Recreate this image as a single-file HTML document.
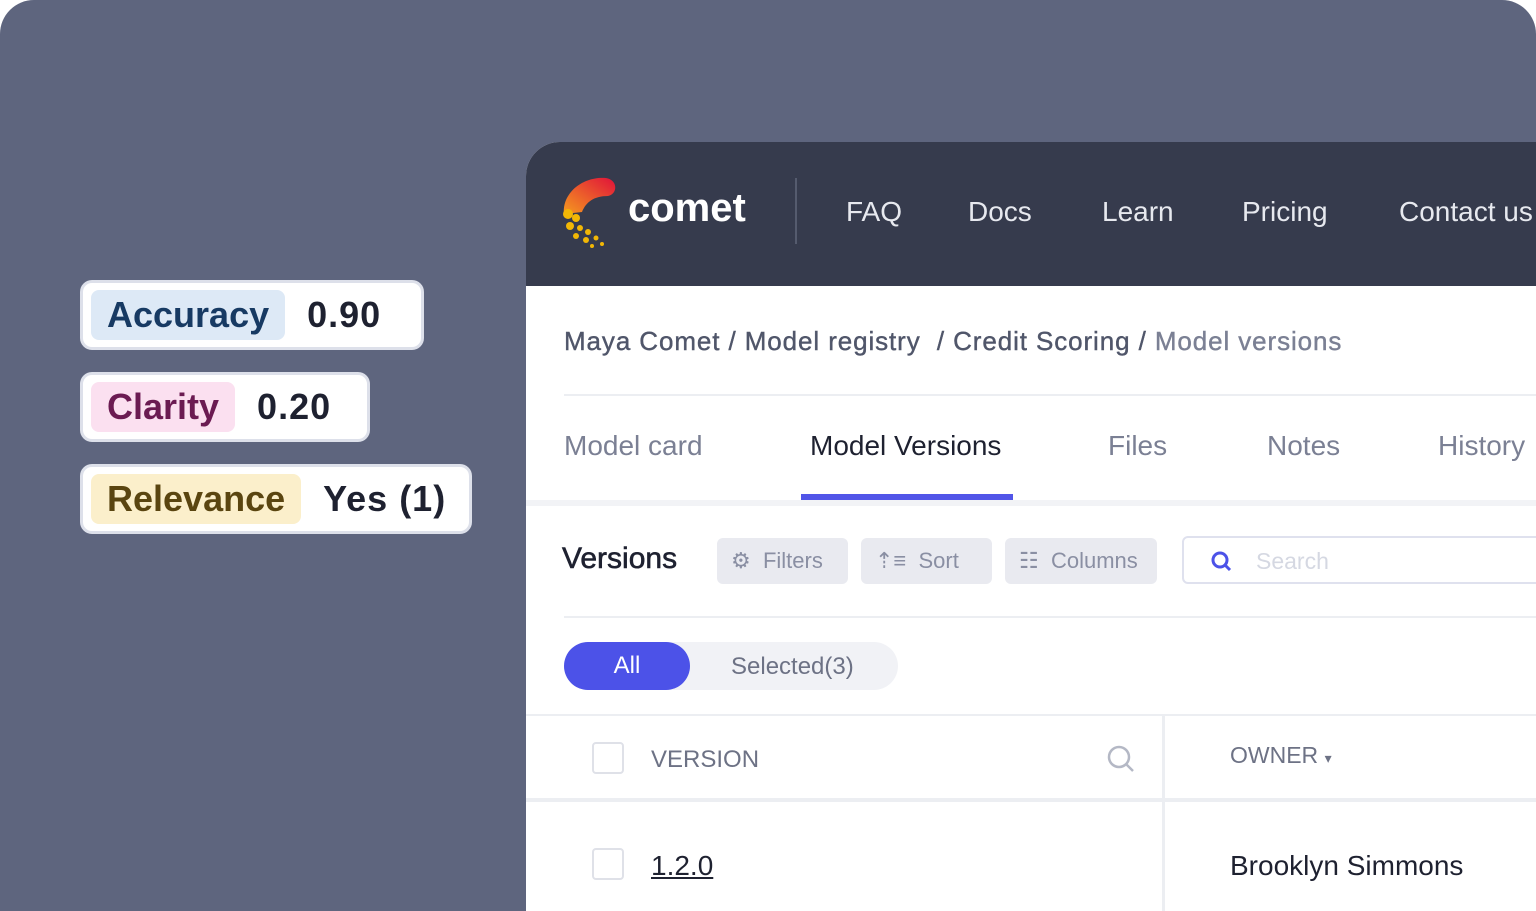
<!DOCTYPE html>
<html><head><style>
*{margin:0;padding:0;box-sizing:border-box}
body{width:1536px;height:911px;overflow:hidden;background:#fff;font-family:"Liberation Sans",sans-serif;position:relative}
.bg{position:absolute;left:0;top:0;width:1536px;height:911px;background:#5e657e;border-radius:34px 34px 0 0}
.card{position:absolute;left:80px;height:70px;background:#fff;border:3px solid #dde0ea;border-radius:12px;display:flex;align-items:center}
.tag{margin-left:8px;height:50px;border-radius:8px;padding:0 16px;display:flex;align-items:center;font-weight:bold;font-size:36px}
.val{font-weight:bold;font-size:36px;color:#1e2130;margin-left:22px;letter-spacing:1px}
.app{position:absolute;left:526px;top:142px;width:1010px;height:769px;background:#fff;border-radius:34px 0 0 0;overflow:hidden}
.hdr{height:144px;background:#363b4d;position:relative;color:#fff}
.hdr .nav{position:absolute;top:54px;font-size:28px;color:#e7e9ef}
.abs{position:absolute}
.btn{position:absolute;top:396px;height:46px;background:#e9eaf0;border-radius:6px;color:#8a8fa3;font-size:22px;display:flex;align-items:center;padding-left:14px}
</style></head><body>
<div class="bg"></div>
<div class="card" style="top:280px;width:344px"><div class="tag" style="background:#dde9f6;color:#173a63">Accuracy</div><div class="val">0.90</div></div>
<div class="card" style="top:372px;width:290px"><div class="tag" style="background:#fbe0f0;color:#6b1b52">Clarity</div><div class="val">0.20</div></div>
<div class="card" style="top:464px;width:392px"><div class="tag" style="background:#fbefcb;color:#5a4510">Relevance</div><div class="val">Yes (1)</div></div>
<div class="app">
<div class="hdr">
<svg class="abs" style="left:34px;top:32px" width="60" height="76" viewBox="0 0 60 76"><defs><linearGradient id="g" x1="0" y1="1" x2="1" y2="0"><stop offset="0" stop-color="#f59a1f"/><stop offset="1" stop-color="#e0123a"/></linearGradient></defs><path d="M4 40 C2 18 24 2 46 4 C58 6 58 20 48 22 C34 22 26 28 22 38 Z" fill="url(#g)"/><g fill="#f2b705"><circle cx="8" cy="40" r="5"/><circle cx="16" cy="44" r="4"/><circle cx="10" cy="52" r="4"/><circle cx="20" cy="54" r="3"/><circle cx="28" cy="58" r="3"/><circle cx="16" cy="62" r="3"/><circle cx="26" cy="66" r="3"/><circle cx="36" cy="64" r="2.5"/><circle cx="42" cy="70" r="2"/><circle cx="32" cy="72" r="2"/></g></svg>
<div class="abs" style="left:102px;top:44px;font-size:40px;font-weight:bold;color:#fff">comet</div>
<div class="abs" style="left:269px;top:36px;width:2px;height:66px;background:#555b6e"></div>
<div class="nav" style="left:320px">FAQ</div><div class="nav" style="left:442px">Docs</div><div class="nav" style="left:576px">Learn</div><div class="nav" style="left:716px">Pricing</div><div class="nav" style="left:873px;white-space:nowrap">Contact us</div>
</div>
<div class="abs" style="left:38px;top:184px;font-size:26px;color:#7b8094;white-space:nowrap;letter-spacing:0.9px;-webkit-text-stroke:0.4px"><span style="color:#50566a">Maya Comet / Model registry &nbsp;/ Credit Scoring /</span> Model versions</div>
<div class="abs" style="left:38px;top:252px;width:972px;height:2px;background:#eceef2"></div>
<div class="abs" style="left:38px;top:288px;font-size:28px;color:#7b8094">Model card</div>
<div class="abs" style="left:284px;top:288px;font-size:28px;color:#1e2130">Model Versions</div>
<div class="abs" style="left:582px;top:288px;font-size:28px;color:#7b8094">Files</div>
<div class="abs" style="left:741px;top:288px;font-size:28px;color:#7b8094">Notes</div>
<div class="abs" style="left:912px;top:288px;font-size:28px;color:#7b8094">History</div>
<div class="abs" style="left:275px;top:352px;width:212px;height:6px;background:#5155e8"></div>
<div class="abs" style="left:0;top:358px;width:1010px;height:6px;background:#f2f3f6"></div>
<div class="abs" style="left:36px;top:400px;font-size:30px;color:#1e2130;-webkit-text-stroke:0.6px">Versions</div>
<div class="btn" style="left:191px;width:131px">⚙&nbsp; Filters</div>
<div class="btn" style="left:335px;width:131px">⇡≡&nbsp; Sort</div>
<div class="btn" style="left:479px;width:152px">☷&nbsp; Columns</div>
<div class="abs" style="left:656px;top:394px;width:360px;height:48px;border:2px solid #dfe1ee;border-radius:6px"><svg class="abs" style="left:26px;top:12px" width="22" height="22"><circle cx="10" cy="10" r="7" fill="none" stroke="#4c52e8" stroke-width="3"/><path d="M15 15l5 5" stroke="#4c52e8" stroke-width="3"/></svg><span class="abs" style="left:72px;top:10px;font-size:23px;color:#d5d8e2">Search</span></div>
<div class="abs" style="left:38px;top:474px;width:972px;height:2px;background:#eceef2"></div>
<div class="abs" style="left:38px;top:500px;width:334px;height:48px;background:#f1f2f6;border-radius:24px"></div>
<div class="abs" style="left:38px;top:500px;width:126px;height:48px;background:#4c52e8;border-radius:24px;color:#fff;font-size:24px;text-align:center;line-height:48px">All</div>
<div class="abs" style="left:205px;top:511px;font-size:24px;color:#6d7285">Selected(3)</div>
<div class="abs" style="left:0;top:572px;width:1010px;height:2px;background:#eceef2"></div>
<div class="abs" style="left:636px;top:572px;width:3px;height:200px;background:#eceef2"></div>
<div class="abs" style="left:66px;top:600px;width:32px;height:32px;border:2px solid #dfe1e8;border-radius:4px"></div>
<div class="abs" style="left:125px;top:604px;font-size:24px;color:#6d7285">VERSION</div>
<svg class="abs" style="left:580px;top:602px" width="30" height="30"><circle cx="13" cy="13" r="10" fill="none" stroke="#b4b8c5" stroke-width="2.5"/><path d="M20 20l7 7" stroke="#b4b8c5" stroke-width="2.5"/></svg>
<div class="abs" style="left:704px;top:600px;font-size:23px;color:#6d7285">OWNER <span style="font-size:14px">▾</span></div>
<div class="abs" style="left:0;top:656px;width:1010px;height:4px;background:#eceef2"></div>
<div class="abs" style="left:66px;top:706px;width:32px;height:32px;border:2px solid #dfe1e8;border-radius:4px"></div>
<div class="abs" style="left:125px;top:708px;font-size:28px;color:#1e2130;text-decoration:underline">1.2.0</div>
<div class="abs" style="left:704px;top:708px;font-size:28px;color:#1e2130">Brooklyn Simmons</div>
</div>
</body></html>
